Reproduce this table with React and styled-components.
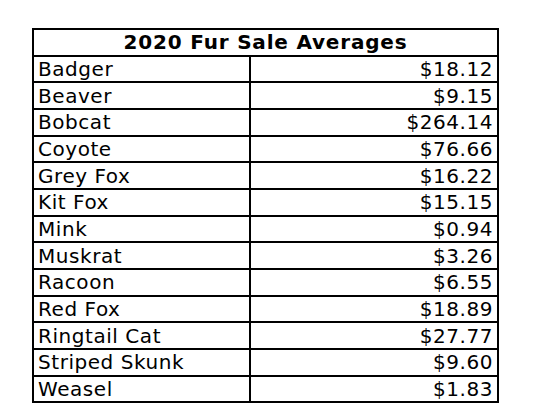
import { Fragment } from 'react';
import styled, { createGlobalStyle } from 'styled-components';

const GlobalStyle = createGlobalStyle`
  body {
    margin: 0;
    background: #fff;
    font-family: "DejaVu Sans", Verdana, sans-serif;
  }
`;

const Page = styled.div`
  padding: 28px 0 0 32px;
`;

const Sheet = styled.div`
  box-sizing: border-box;
  width: 467px;
  border: 2px solid #000;
  border-bottom: none;
  display: grid;
  grid-template-columns: 217px 1fr;
  grid-auto-rows: 26.67px;
  color: #000;
  font-size: 20px;
  letter-spacing: 0.55px;
`;

const Title = styled.div`
  grid-column: 1 / -1;
  box-sizing: border-box;
  border-bottom: 2px solid #000;
  display: flex;
  align-items: center;
  justify-content: center;
  font-weight: bold;
  letter-spacing: 0.8px;
`;

const Cell = styled.div`
  box-sizing: border-box;
  border-bottom: 2px solid #000;
  border-right: ${(p) => (p.$num ? 'none' : '2px solid #000')};
  padding: 0 4px;
  display: flex;
  align-items: center;
  justify-content: ${(p) => (p.$num ? 'flex-end' : 'flex-start')};
  white-space: nowrap;
`;

const averages = [
  ['Badger', '$18.12'],
  ['Beaver', '$9.15'],
  ['Bobcat', '$264.14'],
  ['Coyote', '$76.66'],
  ['Grey Fox', '$16.22'],
  ['Kit Fox', '$15.15'],
  ['Mink', '$0.94'],
  ['Muskrat', '$3.26'],
  ['Racoon', '$6.55'],
  ['Red Fox', '$18.89'],
  ['Ringtail Cat', '$27.77'],
  ['Striped Skunk', '$9.60'],
  ['Weasel', '$1.83'],
];

export default function App() {
  return (
    <>
      <GlobalStyle />
      <Page>
        <Sheet>
          <Title>2020 Fur Sale Averages</Title>
          {averages.map(([name, price]) => (
            <Fragment key={name}>
              <Cell>{name}</Cell>
              <Cell $num>{price}</Cell>
            </Fragment>
          ))}
        </Sheet>
      </Page>
    </>
  );
}
